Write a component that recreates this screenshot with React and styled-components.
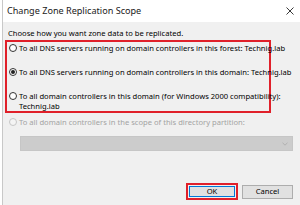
import React from "react";
import styled, { createGlobalStyle } from "styled-components";

const Global = createGlobalStyle`
  html, body { margin: 0; padding: 0; background: #ffffff; }
  body { width: 300px; height: 205px; overflow: hidden; }
  #root { width: 300px; height: 205px; }
`;

const Window = styled.div`
  margin-left: 2px;
  width: 297px;
  height: 205px;
  border-left: 1px solid #c8c8c8;
  display: flex;
  flex-direction: column;
  font-family: "Noto Sans", "Open Sans", sans-serif;
  color: #000;
`;

const TitleBar = styled.div`
  height: 21px;
  flex: none;
  background: #ffffff;
  display: flex;
  align-items: center;
  justify-content: space-between;
  padding: 0 6px 1px 4px;
`;

const Title = styled.span`
  font-size: 9.1px;
  color: #1a1a1a;
`;

const Body = styled.div`
  flex: 1;
  background: #f0f0f0;
  display: flex;
  flex-direction: column;
  padding: 6px 7px 0 0;
`;

const Prompt = styled.div`
  font-size: 7.6px;
  line-height: 10px;
  padding-left: 5px;
  height: 10px;
`;

const Highlight = styled.div`
  margin-top: 2px;
  margin-left: 2px;
  width: 260px;
  border: 2px solid #e0202a;
  padding: 1px 0 0 2px;
  display: flex;
  flex-direction: column;
  gap: 14px;
`;

const Option = styled.label`
  display: flex;
  align-items: flex-start;
  gap: 2px;
  font-size: 7.6px;
  line-height: 10px;
  color: ${(p) => (p.$disabled ? "#a3a3a3" : "#000")};
  padding-left: ${(p) => p.$indent || 0}px;
  margin-top: ${(p) => p.$top || 0}px;
  white-space: nowrap;
`;

const Radio = styled.span`
  flex: none;
  width: 8px;
  height: 8px;
  margin-top: 1px;
  border-radius: 50%;
  box-sizing: border-box;
  border: 1px solid ${(p) => (p.$disabled ? "#c6c6c6" : "#333")};
  background: ${(p) => (p.$disabled ? "#f4f4f4" : "#fff")};
  display: flex;
  align-items: center;
  justify-content: center;
  &::after {
    content: "";
    width: 4px;
    height: 4px;
    border-radius: 50%;
    background: #222;
    display: ${(p) => (p.$checked ? "block" : "none")};
  }
`;

const Select = styled.div`
  margin: 9px 0 0 17px;
  width: 273px;
  height: 15px;
  box-sizing: border-box;
  background: #cccccc;
  border: 1px solid #c6c6c6;
  display: flex;
  align-items: center;
  justify-content: flex-end;
  padding-right: 4px;
`;

const Footer = styled.div`
  margin-top: 32px;
  display: flex;
  align-items: center;
  justify-content: flex-end;
  gap: 4px;
`;

const Focus = styled.div`
  border: 2px solid #e0202a;
  padding: 1px;
  display: flex;
`;

const Button = styled.button`
  box-sizing: border-box;
  width: ${(p) => p.$w}px;
  height: ${(p) => p.$h}px;
  padding: 0;
  margin: 0;
  font-family: "Noto Sans", "Open Sans", sans-serif;
  font-size: 7.6px;
  line-height: 1;
  color: #000;
  background: #e1e1e1;
  border: 1px solid ${(p) => (p.$default ? "#0078d7" : "#adadad")};
`;

const Close = () => (
  <svg width="8" height="8" viewBox="0 0 8 8">
    <path d="M0.5 0.5 L7.5 7.5 M7.5 0.5 L0.5 7.5" stroke="#222" strokeWidth="0.9" fill="none" />
  </svg>
);

const Chevron = () => (
  <svg width="6" height="4" viewBox="0 0 6 4">
    <path d="M0.5 0.8 L3 3.2 L5.5 0.8" stroke="#a8a8a8" strokeWidth="0.8" fill="none" />
  </svg>
);

export default function App() {
  return (
    <>
      <Global />
      <Window>
        <TitleBar>
          <Title>Change Zone Replication Scope</Title>
          <Close />
        </TitleBar>
        <Body>
          <Prompt>Choose how you want zone data to be replicated.</Prompt>
          <Highlight>
            <Option>
              <Radio />
              <span>To all DNS servers running on domain controllers in this forest: Technig.lab</span>
            </Option>
            <Option>
              <Radio $checked />
              <span>To all DNS servers running on domain controllers in this domain: Technig.lab</span>
            </Option>
            <Option>
              <Radio />
              <span>
                To all domain controllers in this domain (for Windows 2000 compatibility):
                <br />
                Technig.lab
              </span>
            </Option>
          </Highlight>
          <Option $disabled $indent={6} $top={4}>
            <Radio $disabled />
            <span>To all domain controllers in the scope of this directory partition:</span>
          </Option>
          <Select>
            <Chevron />
          </Select>
          <Footer>
            <Focus>
              <Button $default $w={46} $h={11}>OK</Button>
            </Focus>
            <Button $w={51} $h={14}>Cancel</Button>
          </Footer>
        </Body>
      </Window>
    </>
  );
}
